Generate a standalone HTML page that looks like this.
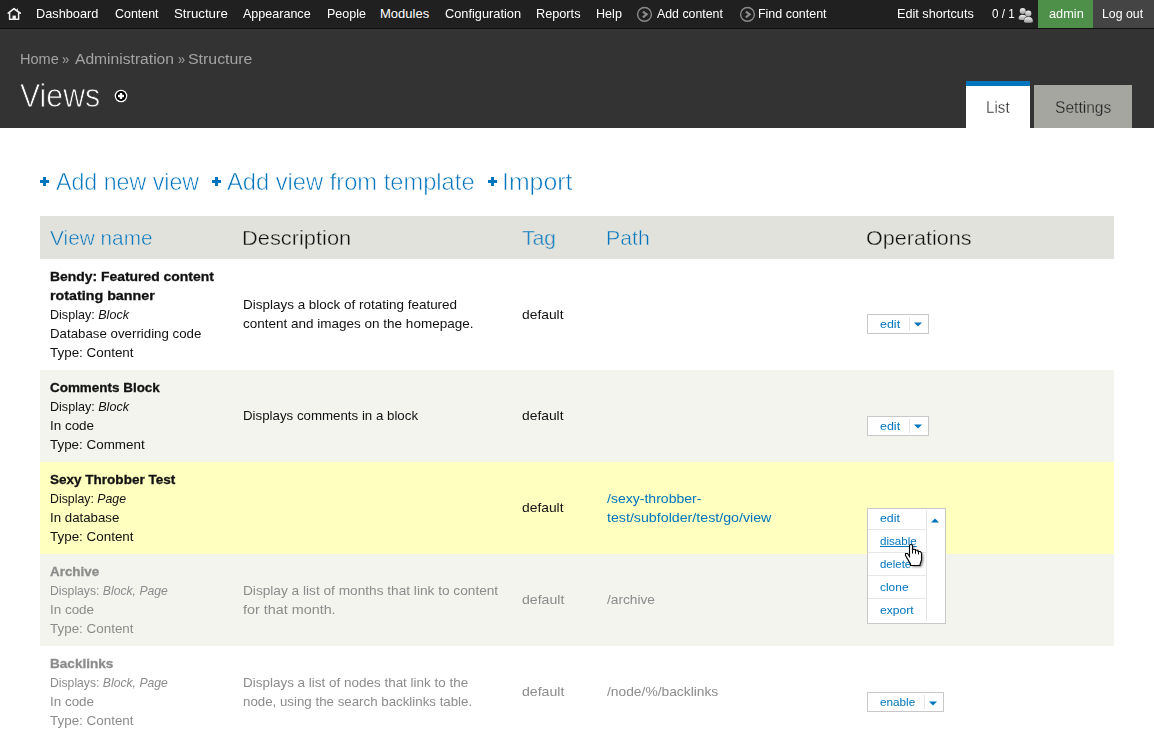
<!DOCTYPE html>
<html><head><meta charset="utf-8"><title>Views</title>
<style>
html,body{margin:0;padding:0;}
body{width:1154px;height:738px;overflow:hidden;position:relative;background:#fff;font-family:"Liberation Sans",sans-serif;}
.t{position:absolute;white-space:nowrap;transform-origin:0 0;font-family:"Liberation Sans",sans-serif;}
.b{position:absolute;}
.t b{-webkit-text-stroke:0.3px currentColor;}
</style></head><body>
<!-- toolbar -->
<div class="b" style="left:0;top:0;width:1154px;height:28px;background:#202020;"></div>
<div class="b" style="left:0;top:28px;width:1154px;height:1px;background:#101010;"></div>
<div class="b" style="left:1038px;top:0;width:55px;height:28px;background:#4e8f49;"></div>
<div class="b" style="left:1093px;top:0;width:61px;height:28px;background:#444;"></div>
<!-- header -->
<div class="b" style="left:0;top:29px;width:1154px;height:99px;background:#333;"></div>
<!-- tabs -->
<div class="b" style="left:966px;top:81px;width:64px;height:5px;background:#0074bd;"></div>
<div class="b" style="left:966px;top:86px;width:64px;height:42px;background:#fff;"></div>
<div class="b" style="left:1034px;top:85px;width:98px;height:43px;background:#a6a6a1;"></div>
<!-- table -->
<div class="b" style="left:40px;top:216px;width:1074px;height:43px;background:#e1e2dc;"></div>
<div class="b" style="left:40px;top:370px;width:1074px;height:92px;background:#f3f4ee;"></div>
<div class="b" style="left:40px;top:462px;width:1074px;height:92px;background:#ffffc0;"></div>
<div class="b" style="left:40px;top:554px;width:1074px;height:92px;background:#f3f4ee;"></div>

<!-- icons -->
<svg class="b" style="left:0;top:0" width="30" height="28" viewBox="0 0 30 28">
  <path d="M8.3 13.2 L14 8.7 L20.3 13.2" fill="none" stroke="#eee" stroke-width="1.7" stroke-linecap="round" stroke-linejoin="round"/>
  <path d="M9.6 12.5 V19.2 H18.6 V12.5" fill="none" stroke="#eee" stroke-width="1.5"/>
  <rect x="12.5" y="15.6" width="3.4" height="3.8" fill="#eee"/>
  <path d="M16.6 10.2 L17.6 7.8 L18 11.4 Z" fill="#eee"/>
</svg>
<svg class="b" style="left:632px;top:4px" width="30" height="22" viewBox="0 0 30 22">
  <circle cx="12.5" cy="10.4" r="6.9" fill="none" stroke="#8a8a8a" stroke-width="1.4"/>
  <path d="M10.9 7.7 L14.6 10.4 L10.9 13.3" fill="none" stroke="#8a8a8a" stroke-width="2.2"/>
</svg>
<svg class="b" style="left:735px;top:4px" width="30" height="22" viewBox="0 0 30 22">
  <circle cx="12.5" cy="10.4" r="6.9" fill="none" stroke="#8a8a8a" stroke-width="1.4"/>
  <path d="M10.9 7.7 L14.6 10.4 L10.9 13.3" fill="none" stroke="#8a8a8a" stroke-width="2.2"/>
</svg>
<svg class="b" style="left:1012px;top:4px" width="26" height="22" viewBox="0 0 26 22">
  <defs><linearGradient id="pg" x1="0" y1="0" x2="0" y2="1"><stop offset="0" stop-color="#f2f2f2"/><stop offset="1" stop-color="#9a9a9a"/></linearGradient></defs>
  <circle cx="10.7" cy="7" r="3" fill="url(#pg)"/>
  <path d="M6.5 14.8 Q6.5 10.8 10.7 10.8 Q13.6 10.8 14.6 12.6 Q12.2 13.6 11.9 16 Q7 16.2 6.5 14.8 Z" fill="url(#pg)"/>
  <circle cx="16.3" cy="9.5" r="3.1" fill="url(#pg)"/>
  <path d="M11.9 17.4 Q11.9 13 16.4 13 Q20.9 13 20.9 17.4 Q20.9 18.8 16.4 18.8 Q11.9 18.8 11.9 17.4 Z" fill="url(#pg)"/>
</svg>
<svg class="b" style="left:110px;top:85px" width="22" height="22" viewBox="0 0 22 22">
  <circle cx="11" cy="11" r="6.3" fill="#fff"/>
  <circle cx="11" cy="11" r="5" fill="#000"/>
  <rect x="8" y="9.8" width="6" height="2.4" fill="#fff"/>
  <rect x="9.8" y="8" width="2.4" height="6" fill="#fff"/>
</svg>
<!-- action plus -->
<svg class="b" style="left:40px;top:177px" width="9" height="9"><path d="M0 3H9V6H0Z M3 0H6V9H3Z" fill="#0074bd"/></svg>
<svg class="b" style="left:212px;top:177px" width="9" height="9"><path d="M0 3H9V6H0Z M3 0H6V9H3Z" fill="#0074bd"/></svg>
<svg class="b" style="left:488px;top:177px" width="9" height="9"><path d="M0 3H9V6H0Z M3 0H6V9H3Z" fill="#0074bd"/></svg>

<!-- buttons -->
<div class="b" style="left:867px;top:314px;width:60px;height:18px;border:1px solid #c8c8c8;background:#fff;"></div>
<div class="b" style="left:909px;top:317px;width:1px;height:14px;background:#e6e6e6;"></div>
<svg class="b" style="left:914px;top:322px" width="8" height="5"><path d="M0 0.5H8L4 4.5Z" fill="#0074bd"/></svg>

<div class="b" style="left:867px;top:416px;width:60px;height:18px;border:1px solid #c8c8c8;background:#fff;"></div>
<div class="b" style="left:909px;top:419px;width:1px;height:14px;background:#e6e6e6;"></div>
<svg class="b" style="left:914px;top:424px" width="8" height="5"><path d="M0 0.5H8L4 4.5Z" fill="#0074bd"/></svg>

<div class="b" style="left:867px;top:692px;width:75px;height:18px;border:1px solid #c8c8c8;background:#fff;"></div>
<div class="b" style="left:924px;top:695px;width:1px;height:14px;background:#e6e6e6;"></div>
<svg class="b" style="left:929px;top:701px" width="8" height="5"><path d="M0 0.5H8L4 4.5Z" fill="#0074bd"/></svg>

<!-- dropdown -->
<div class="b" style="left:867px;top:508px;width:77px;height:114px;border:1px solid #c8c8c8;background:#fff;"></div>
<div class="b" style="left:926px;top:510px;width:1px;height:111px;background:#e6e6e6;"></div>
<div class="b" style="left:868px;top:529px;width:58px;height:1px;background:#e8e8e8;"></div>
<div class="b" style="left:868px;top:552px;width:58px;height:1px;background:#e8e8e8;"></div>
<div class="b" style="left:868px;top:575px;width:58px;height:1px;background:#e8e8e8;"></div>
<div class="b" style="left:868px;top:598px;width:58px;height:1px;background:#e8e8e8;"></div>
<svg class="b" style="left:931px;top:518px" width="8" height="5"><path d="M0 4.5H8L4 0.5Z" fill="#0074bd"/></svg>

<div class='t' style='left:36.42px;top:7.00px;font-size:13px;line-height:13px;transform:scaleX(0.9806);color:#fff;'>Dashboard</div>
<div class='t' style='left:115.00px;top:7.00px;font-size:13px;line-height:13px;transform:scaleX(0.9565);color:#fff;'>Content</div>
<div class='t' style='left:173.98px;top:7.00px;font-size:13px;line-height:13px;transform:scaleX(1.0196);color:#fff;'>Structure</div>
<div class='t' style='left:243.00px;top:7.00px;font-size:13px;line-height:13px;transform:scaleX(0.9643);color:#fff;'>Appearance</div>
<div class='t' style='left:326.54px;top:7.00px;font-size:13px;line-height:13px;transform:scaleX(0.9615);color:#fff;'>People</div>
<div class='t' style='left:380.00px;top:7.00px;font-size:13px;line-height:13px;transform:scaleX(1.0000);color:#fff;'>Modules</div>
<div class='t' style='left:445.30px;top:7.00px;font-size:13px;line-height:13px;transform:scaleX(0.9831);color:#fff;'>Configuration</div>
<div class='t' style='left:536.02px;top:7.00px;font-size:13px;line-height:13px;transform:scaleX(0.9773);color:#fff;'>Reports</div>
<div class='t' style='left:595.53px;top:7.00px;font-size:13px;line-height:13px;transform:scaleX(0.9692);color:#fff;'>Help</div>
<div class='t' style='left:656.50px;top:7.00px;font-size:13px;line-height:13px;transform:scaleX(0.9500);color:#fff;'>Add content</div>
<div class='t' style='left:758.04px;top:7.00px;font-size:13px;line-height:13px;transform:scaleX(0.9577);color:#fff;'>Find content</div>
<div class='t' style='left:897.03px;top:7.00px;font-size:13px;line-height:13px;transform:scaleX(0.9744);color:#fff;'>Edit shortcuts</div>
<div class='t' style='left:992.00px;top:7.00px;font-size:13px;line-height:13px;transform:scaleX(0.8960);color:#fff;'>0 / 1</div>
<div class='t' style='left:1048.60px;top:7.00px;font-size:13px;line-height:13px;transform:scaleX(0.9829);color:#fff;'>admin</div>
<div class='t' style='left:1102.35px;top:7.00px;font-size:13px;line-height:13px;transform:scaleX(0.9465);color:#fff;'>Log out</div>
<div class='t' style='left:19.56px;top:51.65px;font-size:14px;line-height:14px;transform:scaleX(1.0389);color:#a3a3a3;'>Home</div>
<div class='t' style='left:62.47px;top:51.65px;font-size:14px;line-height:14px;transform:scaleX(0.9333);color:#a3a3a3;'>&raquo;</div>
<div class='t' style='left:74.70px;top:51.65px;font-size:14px;line-height:14px;transform:scaleX(1.1159);color:#a3a3a3;'>Administration</div>
<div class='t' style='left:177.58px;top:51.65px;font-size:14px;line-height:14px;transform:scaleX(0.9167);color:#a3a3a3;'>&raquo;</div>
<div class='t' style='left:187.97px;top:51.65px;font-size:14px;line-height:14px;transform:scaleX(1.1345);color:#a3a3a3;'>Structure</div>
<div class='t' style='left:20.10px;top:79.27px;font-size:33px;line-height:33px;transform:scaleX(0.9161);color:#fff;-webkit-text-stroke:0.8px #333;'>Views</div>
<div class='t' style='left:985.91px;top:98.61px;font-size:17px;line-height:17px;transform:scaleX(0.8923);color:#222;-webkit-text-stroke:0.3px #fff;'>List</div>
<div class='t' style='left:1054.58px;top:98.61px;font-size:17px;line-height:17px;transform:scaleX(0.9167);color:#1e1e1e;-webkit-text-stroke:0.3px #a6a6a1;'>Settings</div>
<div class='t' style='left:55.70px;top:169.68px;font-size:24px;line-height:24px;transform:scaleX(0.9662);color:#0074bd;-webkit-text-stroke:0.6px #fff;'>Add new view</div>
<div class='t' style='left:227.40px;top:169.68px;font-size:24px;line-height:24px;transform:scaleX(0.9872);color:#0074bd;-webkit-text-stroke:0.6px #fff;'>Add view from template</div>
<div class='t' style='left:501.63px;top:169.68px;font-size:24px;line-height:24px;transform:scaleX(1.0348);color:#0074bd;-webkit-text-stroke:0.6px #fff;'>Import</div>
<div class='t' style='left:49.90px;top:226.92px;font-size:21px;line-height:21px;transform:scaleX(0.9913);color:#0074bd;-webkit-text-stroke:0.5px #e1e2dc;'>View name</div>
<div class='t' style='left:241.96px;top:226.92px;font-size:21px;line-height:21px;transform:scaleX(1.0398);color:#111;-webkit-text-stroke:0.35px #e1e2dc;'>Description</div>
<div class='t' style='left:521.90px;top:226.92px;font-size:21px;line-height:21px;transform:scaleX(1.0000);color:#0074bd;-webkit-text-stroke:0.5px #e1e2dc;'>Tag</div>
<div class='t' style='left:605.89px;top:226.92px;font-size:21px;line-height:21px;transform:scaleX(1.0146);color:#0074bd;-webkit-text-stroke:0.5px #e1e2dc;'>Path</div>
<div class='t' style='left:866.27px;top:226.92px;font-size:21px;line-height:21px;transform:scaleX(1.0287);color:#111;-webkit-text-stroke:0.35px #e1e2dc;'>Operations</div>
<div class='t' style='left:50.00px;top:270.00px;font-size:13px;line-height:13px;transform:scaleX(1.0699);color:#111;'><b>Bendy: Featured content</b></div>
<div class='t' style='left:50.00px;top:289.00px;font-size:13px;line-height:13px;transform:scaleX(1.0989);color:#111;'><b>rotating banner</b></div>
<div class='t' style='left:50.00px;top:308.00px;font-size:13px;line-height:13px;transform:scaleX(0.9671);color:#111;'>Display: <i>Block</i></div>
<div class='t' style='left:50.00px;top:327.00px;font-size:13px;line-height:13px;transform:scaleX(1.0216);color:#111;'>Database overriding code</div>
<div class='t' style='left:50.00px;top:346.00px;font-size:13px;line-height:13px;transform:scaleX(1.0321);color:#111;'>Type: Content</div>
<div class='t' style='left:243.00px;top:298.00px;font-size:13px;line-height:13px;transform:scaleX(1.0359);color:#111;'>Displays a block of rotating featured</div>
<div class='t' style='left:243.00px;top:317.00px;font-size:13px;line-height:13px;transform:scaleX(1.0385);color:#111;'>content and images on the homepage.</div>
<div class='t' style='left:522.00px;top:308.00px;font-size:13px;line-height:13px;transform:scaleX(1.0641);color:#111;'>default</div>
<div class='t' style='left:50.00px;top:381.00px;font-size:13px;line-height:13px;transform:scaleX(1.0340);color:#111;'><b>Comments Block</b></div>
<div class='t' style='left:50.00px;top:400.00px;font-size:13px;line-height:13px;transform:scaleX(0.9671);color:#111;'>Display: <i>Block</i></div>
<div class='t' style='left:50.00px;top:419.00px;font-size:13px;line-height:13px;transform:scaleX(1.0333);color:#111;'>In code</div>
<div class='t' style='left:50.00px;top:438.00px;font-size:13px;line-height:13px;transform:scaleX(1.0315);color:#111;'>Type: Comment</div>
<div class='t' style='left:243.00px;top:409.00px;font-size:13px;line-height:13px;transform:scaleX(1.0222);color:#111;'>Displays comments in a block</div>
<div class='t' style='left:522.00px;top:409.00px;font-size:13px;line-height:13px;transform:scaleX(1.0641);color:#111;'>default</div>
<div class='t' style='left:50.00px;top:473.00px;font-size:13px;line-height:13px;transform:scaleX(1.0400);color:#111;'><b>Sexy Throbber Test</b></div>
<div class='t' style='left:50.00px;top:492.00px;font-size:13px;line-height:13px;transform:scaleX(0.9475);color:#111;'>Display: <i>Page</i></div>
<div class='t' style='left:50.00px;top:511.00px;font-size:13px;line-height:13px;transform:scaleX(1.0206);color:#111;'>In database</div>
<div class='t' style='left:50.00px;top:530.00px;font-size:13px;line-height:13px;transform:scaleX(1.0321);color:#111;'>Type: Content</div>
<div class='t' style='left:522.00px;top:501.00px;font-size:13px;line-height:13px;transform:scaleX(1.0641);color:#111;'>default</div>
<div class='t' style='left:607.00px;top:492.00px;font-size:13px;line-height:13px;transform:scaleX(1.0805);color:#0074bd;'>/sexy-throbber-</div>
<div class='t' style='left:607.00px;top:511.00px;font-size:13px;line-height:13px;transform:scaleX(1.0934);color:#0074bd;'>test/subfolder/test/go/view</div>
<div class='t' style='left:50.00px;top:565.00px;font-size:13px;line-height:13px;transform:scaleX(1.0312);color:#8c8c8c;'><b>Archive</b></div>
<div class='t' style='left:50.00px;top:584.00px;font-size:13px;line-height:13px;transform:scaleX(0.9373);color:#8c8c8c;'>Displays: <i>Block, Page</i></div>
<div class='t' style='left:50.00px;top:603.00px;font-size:13px;line-height:13px;transform:scaleX(1.0333);color:#8c8c8c;'>In code</div>
<div class='t' style='left:50.00px;top:622.00px;font-size:13px;line-height:13px;transform:scaleX(1.0321);color:#8c8c8c;'>Type: Content</div>
<div class='t' style='left:243.00px;top:584.00px;font-size:13px;line-height:13px;transform:scaleX(1.0510);color:#8c8c8c;'>Display a list of months that link to content</div>
<div class='t' style='left:243.00px;top:603.00px;font-size:13px;line-height:13px;transform:scaleX(1.1048);color:#8c8c8c;'>for that month.</div>
<div class='t' style='left:522.00px;top:593.00px;font-size:13px;line-height:13px;transform:scaleX(1.0846);color:#8c8c8c;'>default</div>
<div class='t' style='left:607.00px;top:593.00px;font-size:13px;line-height:13px;transform:scaleX(1.0533);color:#8c8c8c;'>/archive</div>
<div class='t' style='left:50.00px;top:657.00px;font-size:13px;line-height:13px;transform:scaleX(1.0433);color:#8c8c8c;'><b>Backlinks</b></div>
<div class='t' style='left:50.00px;top:676.00px;font-size:13px;line-height:13px;transform:scaleX(0.9373);color:#8c8c8c;'>Displays: <i>Block, Page</i></div>
<div class='t' style='left:50.00px;top:695.00px;font-size:13px;line-height:13px;transform:scaleX(1.0333);color:#8c8c8c;'>In code</div>
<div class='t' style='left:50.00px;top:714.00px;font-size:13px;line-height:13px;transform:scaleX(1.0321);color:#8c8c8c;'>Type: Content</div>
<div class='t' style='left:243.00px;top:676.00px;font-size:13px;line-height:13px;transform:scaleX(1.0355);color:#8c8c8c;'>Displays a list of nodes that link to the</div>
<div class='t' style='left:243.00px;top:695.00px;font-size:13px;line-height:13px;transform:scaleX(1.0229);color:#8c8c8c;'>node, using the search backlinks table.</div>
<div class='t' style='left:522.00px;top:685.00px;font-size:13px;line-height:13px;transform:scaleX(1.0846);color:#8c8c8c;'>default</div>
<div class='t' style='left:607.00px;top:685.00px;font-size:13px;line-height:13px;transform:scaleX(1.0619);color:#8c8c8c;'>/node/%/backlinks</div>
<div class='t' style='left:879.80px;top:318.69px;font-size:11px;line-height:11px;transform:scaleX(1.1333);color:#0074bd;'>edit</div>
<div class='t' style='left:879.80px;top:420.69px;font-size:11px;line-height:11px;transform:scaleX(1.1333);color:#0074bd;'>edit</div>
<div class='t' style='left:879.80px;top:696.69px;font-size:11px;line-height:11px;transform:scaleX(1.0667);color:#0074bd;'>enable</div>
<div class='t' style='left:879.80px;top:512.69px;font-size:11px;line-height:11px;transform:scaleX(1.1222);color:#0074bd;'>edit</div>
<div class='t' style='left:879.80px;top:535.69px;font-size:11px;line-height:11px;transform:scaleX(1.0543);color:#0074bd;'><u>disable</u></div>
<div class='t' style='left:879.80px;top:558.69px;font-size:11px;line-height:11px;transform:scaleX(1.0400);color:#0074bd;'>delete</div>
<div class='t' style='left:879.80px;top:581.69px;font-size:11px;line-height:11px;transform:scaleX(1.0846);color:#0074bd;'>clone</div>
<div class='t' style='left:879.80px;top:604.69px;font-size:11px;line-height:11px;transform:scaleX(1.1032);color:#0074bd;'>export</div>

<!-- cursor -->
<svg class="b" style="left:900px;top:536px" width="30" height="36" viewBox="0 0 30 36">
  <defs><filter id="sh" x="-50%" y="-50%" width="200%" height="200%"><feGaussianBlur stdDeviation="1.2"/></filter></defs>
  <path transform="translate(1.8,1.6)" filter="url(#sh)" opacity="0.45" fill="#000" d="M9.5 20.5 V9.8 Q9.5 8.5 11 8.5 Q12.5 8.5 12.5 9.8 V13.5 H15.5 V14.3 H18 V15.5 H20.2 L21.5 17 V24 L20 28.5 V29.5 H10.5 V28 L5.5 19.5 V17.5 H7.5 L9.5 20.5 Z"/>
  <path d="M9.5 20.5 V9.8 Q9.5 8.5 11 8.5 Q12.5 8.5 12.5 9.8 V13.5 H15.5 V14.3 H18 V15.5 H20.2 L21.5 17 V24 L20 28.5 V29.5 H10.5 V28 L5.5 19.5 V17.5 H7.5 L9.5 20.5 Z" fill="#fff" stroke="#000" stroke-width="1.1"/>
  <path d="M12.5 13.5 V17.5 M15.5 14.3 V17.8 M18.5 15.5 V18.5" stroke="#000" stroke-width="1" fill="none"/>
</svg>
</body></html>
